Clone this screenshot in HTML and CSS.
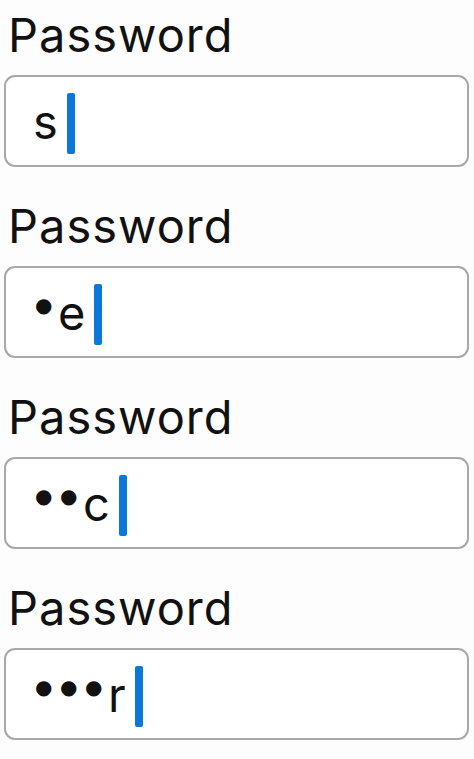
FILE: index.html
```html
<!DOCTYPE html>
<html lang="en">
<head>
<meta charset="utf-8">
<title>Password fields</title>
<link rel="stylesheet" href="styles.css">
</head>
<body>
<main class="stack">
  <section class="field">
    <div class="label">Password</div>
    <div class="input"><span class="typed">s</span><span class="caret"></span></div>
  </section>
  <section class="field">
    <div class="label">Password</div>
    <div class="input"><span class="dot">●</span><span class="typed">e</span><span class="caret"></span></div>
  </section>
  <section class="field">
    <div class="label">Password</div>
    <div class="input"><span class="dot">●</span><span class="dot">●</span><span class="typed">c</span><span class="caret"></span></div>
  </section>
  <section class="field">
    <div class="label">Password</div>
    <div class="input"><span class="dot">●</span><span class="dot">●</span><span class="dot">●</span><span class="typed">r</span><span class="caret"></span></div>
  </section>
</main>
</body>
</html>
```
FILE: styles.css
```css
html, body {
  margin: 0;
  padding: 0;
  background: #fdfdfd;
}
body {
  font-family: Inter, "Liberation Sans", sans-serif;
  color: #111;
}
.stack {
  display: flex;
  flex-direction: column;
  gap: 35px;
  padding: 11px 5px 0 4px;
}
.field {
  display: flex;
  flex-direction: column;
  gap: 17px;
}
.label {
  font-size: 47px;
  line-height: 47px;
  letter-spacing: 1px;
  padding-left: 4px;
}
.input {
  box-sizing: border-box;
  height: 92px;
  border: 2px solid #a8a8a8;
  border-radius: 11px;
  background: #fff;
  display: flex;
  align-items: center;
  padding-left: 27px;
}
.typed {
  font-size: 47px;
  line-height: 1;
  letter-spacing: 1px;
}
.dot {
  flex: 0 0 24px;
  font-family: "DejaVu Sans", sans-serif;
  font-size: 20px;
  line-height: 1;
  margin-left: 2px;
  margin-right: -1px;
  margin-top: -14px;
}
.caret {
  width: 8px;
  height: 61px;
  margin-left: 8px;
  margin-top: 5px;
  border-radius: 2px;
  background: #0a78d8;
}
```
